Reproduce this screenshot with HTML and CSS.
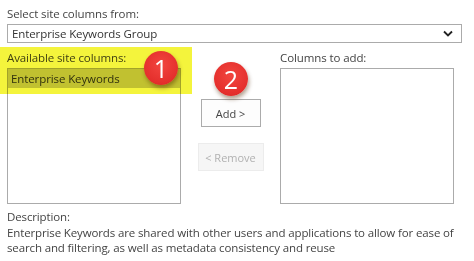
FILE: index.html
```html
<!DOCTYPE html>
<html lang="en">
<head>
    <meta charset="UTF-8">
    <title>Add site columns</title>
    <link rel="stylesheet" href="styles.css">
</head>
<body>

<div class="page">
    <div class="label">Select site columns from:</div>
    <div class="select">
        <span>Enterprise Keywords Group</span>
        <svg class="chevron" width="10" height="7" viewBox="0 0 10 7">
            <path d="M1 1.5 L5 5.5 L9 1.5" fill="none" stroke="#222" stroke-width="1.8"/>
        </svg>
    </div>

    <div class="picker">
        <div class="column">
            <div class="label">Available site columns:</div>
            <div class="listbox">
                <div class="item selected">Enterprise Keywords</div>
            </div>
        </div>

        <div class="actions">
            <button class="btn">Add &gt;</button>
            <button class="btn disabled">&lt; Remove</button>
        </div>

        <div class="column">
            <div class="label">Columns to add:</div>
            <div class="listbox"></div>
        </div>
    </div>

    <div class="description">
        <div>Description:</div>
        <div>Enterprise Keywords are shared with other users and applications to allow for ease of search and filtering, as well as metadata consistency and reuse</div>
    </div>

    <div class="highlight"></div>
    <div class="badge one">1</div>
    <div class="badge two">2</div>
</div>

</body>
</html>
```

FILE: styles.css
```css
body {
    margin: 0;
    background-color: #ffffff;
    font-family: "Open Sans", "Noto Sans", sans-serif;
    font-size: 11.5px;
    color: #444444;
}

.page {
    position: relative;
    width: 474px;
    height: 261px;
    padding: 6px 0 0 7px;
    box-sizing: border-box;
    overflow: hidden;
}

.label {
    line-height: 16px;
    height: 18px;
    letter-spacing: -0.1px;
}

.select {
    width: 455px;
    height: 19px;
    border: 1px solid #ababab;
    box-sizing: border-box;
    display: flex;
    align-items: center;
    justify-content: space-between;
    padding: 0 8px 0 4px;
    color: #333333;
    letter-spacing: -0.1px;
}

.chevron {
    display: block;
}

.picker {
    display: flex;
    margin-top: 7px;
}

.column {
    display: flex;
    flex-direction: column;
}

.listbox {
    width: 174px;
    height: 136px;
    border: 1px solid #ababab;
    box-sizing: border-box;
}

.item {
    height: 19px;
    line-height: 19px;
    padding: 0 3px;
    color: #333333;
    letter-spacing: -0.1px;
}

.item.selected {
    background-color: #cacaca;
}

.actions {
    width: 99px;
    display: flex;
    flex-direction: column;
    align-items: center;
    padding-top: 49px;
    gap: 16px;
}

.btn {
    width: 60px;
    height: 28px;
    background-color: #fdfdfd;
    border: 1px solid #ababab;
    font-family: inherit;
    font-size: 11px;
    color: #444444;
    padding: 0;
}

.btn.disabled {
    width: 66px;
    background-color: #f6f6f6;
    border-color: #ececec;
    color: #b1b1b1;
}

.description {
    margin-top: 5px;
    line-height: 15.5px;
    width: 467px;
    letter-spacing: -0.13px;
}

.highlight {
    position: absolute;
    left: 0;
    top: 47px;
    width: 192px;
    height: 47px;
    background-color: #f4f43c;
    mix-blend-mode: multiply;
}

.badge {
    position: absolute;
    width: 34px;
    height: 34px;
    border-radius: 50%;
    background: radial-gradient(circle at 50% 40%, #f2453f 0%, #e42f2c 70%, #c8201f 100%);
    color: #ffffff;
    font-size: 25px;
    line-height: 34px;
    text-align: center;
    box-shadow: 1px 3px 4px rgba(80, 40, 0, 0.45);
}

.badge.one {
    left: 144px;
    top: 51px;
}

.badge.two {
    left: 214px;
    top: 62px;
}
```
